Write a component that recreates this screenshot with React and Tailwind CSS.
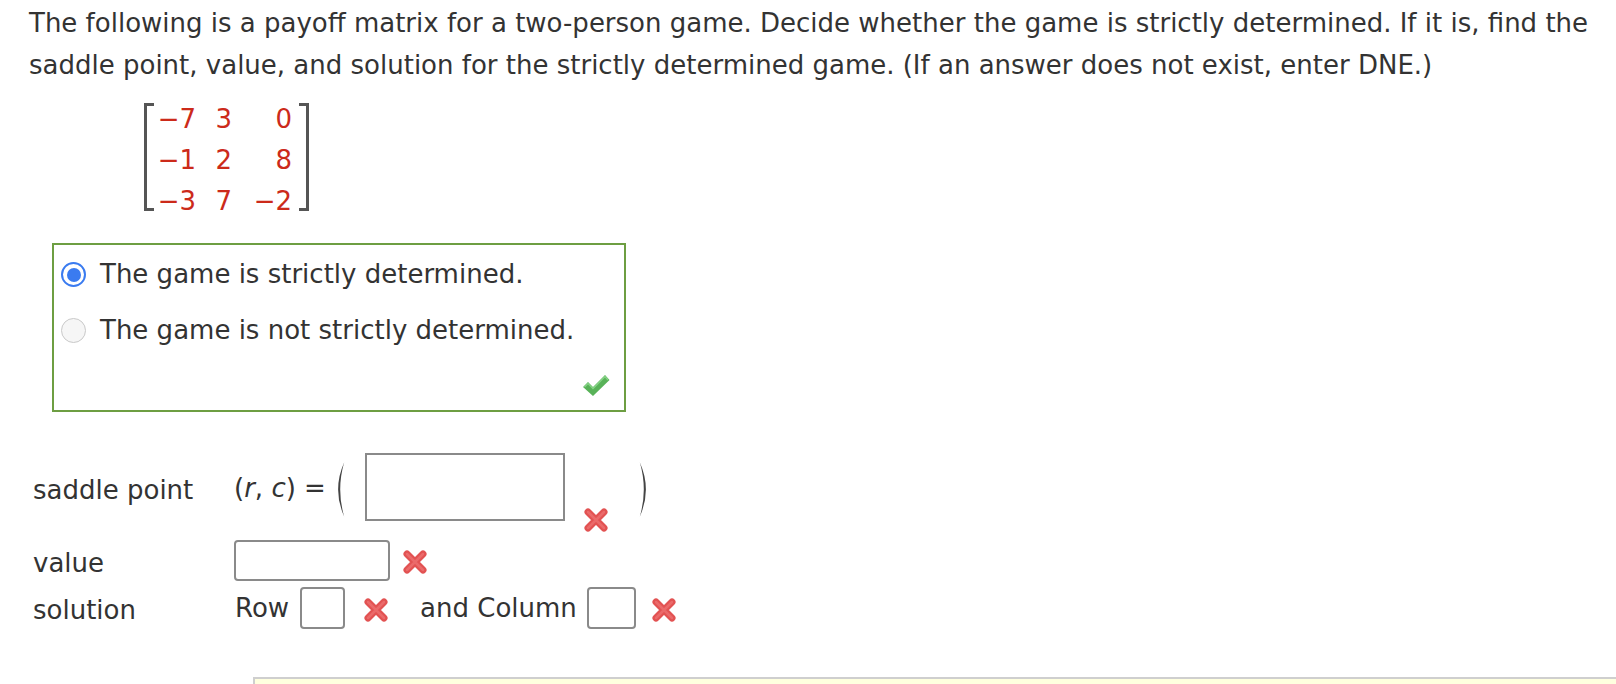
import React from 'react';

const rows = [
  ['\u22127', '3', '0'],
  ['\u22121', '2', '8'],
  ['\u22123', '7', '\u22122'],
];

function Cross() {
  return (
    <svg viewBox="0 0 26 26" className="w-[26px] h-[26px]">
      <path d="M5 5 L21 21 M21 5 L5 21" stroke="#e25252" strokeWidth="7" strokeLinecap="round" fill="none" />
      <path d="M5 5 L21 21 M21 5 L5 21" stroke="#f27c7c" strokeWidth="2.5" strokeLinecap="round" fill="none" opacity="0.6" />
    </svg>
  );
}

function Check() {
  return (
    <svg viewBox="0 0 28 25" className="w-[28px] h-[25px]">
      <path d="M1 14 L6 9 L11 14 L23 2 L27.5 7 L11 23 Z" fill="#58b258" />
      <path d="M2.5 14 L6 10.5 L11 15.5 L23 3.5 L26 7" stroke="#86d486" strokeWidth="1.3" fill="none" />
    </svg>
  );
}

function Paren({ flip }) {
  return (
    <svg viewBox="0 0 14 60" className={`w-[13px] h-[59px] ${flip ? '-scale-x-100' : ''}`}>
      <path d="M12 1 Q-1 30 12 59 Q3.5 30 12 1 Z" fill="#444" />
    </svg>
  );
}

function Radio({ checked }) {
  if (checked) {
    return (
      <span className="flex items-center justify-center w-[25px] h-[25px] rounded-full border-[2.5px] border-[#3a7bf0] bg-white">
        <span className="w-[14px] h-[14px] rounded-full bg-[#3a7bf0]" />
      </span>
    );
  }
  return <span className="w-[25px] h-[25px] rounded-full border border-[#c9c9c9] bg-[#f6f6f6]" />;
}

export default function App() {
  return (
    <div className="font-['DejaVu_Sans',sans-serif] text-[#333] text-[26px] bg-white min-h-[684px]">
      <p className="pl-[29px] pt-[2px] leading-[42px] whitespace-nowrap">
        The following is a payoff matrix for a two-person game. Decide whether the game is strictly determined. If it is, find the
        <br />
        saddle point, value, and solution for the strictly determined game. (If an answer does not exist, enter DNE.)
      </p>

      <div className="ml-[144px] mt-[13px] flex items-start">
        <div className="mt-[4px] w-[10px] h-[108px] border-l-[3px] border-t-[3px] border-b-[3px] border-[#555]" />
        <div className="grid grid-cols-[42px_36px_60px] text-[#cc2a1a] leading-[41px] text-right">
          {rows.map((r, i) =>
            r.map((v, j) => <span key={`${i}-${j}`}>{v}</span>)
          )}
        </div>
        <div className="ml-[7px] mt-[4px] w-[10px] h-[108px] border-r-[3px] border-t-[3px] border-b-[3px] border-[#555]" />
      </div>

      <div className="ml-[52px] mt-[21px] w-[574px] h-[169px] border-2 border-[#6d9e42] flex flex-col">
        <div className="flex items-center gap-[14px] pl-[7px] mt-[17px] h-[25px]">
          <Radio checked />
          <span>The game is strictly determined.</span>
        </div>
        <div className="flex items-center gap-[14px] pl-[7px] mt-[31px] h-[25px]">
          <Radio />
          <span>The game is not strictly determined.</span>
        </div>
        <div className="mt-auto self-end mr-[14px] mb-[12px]">
          <Check />
        </div>
      </div>

      <div className="ml-[33px] mt-[41px] flex items-center h-[68px]">
        <span className="w-[201px] pt-[6px]">saddle point</span>
        <span className="pt-[2px]">(<i>r</i>, <i>c</i>) =</span>
        <span className="ml-[7px] mt-[4px]"><Paren /></span>
        <div className="ml-[19px] w-[200px] h-[68px] border-2 border-[#8a8a8a]" />
        <span className="ml-[18px] self-end mb-[-12px]"><Cross /></span>
        <span className="ml-[29px] mt-[5px]"><Paren flip /></span>
      </div>

      <div className="ml-[33px] mt-[19px] flex items-center h-[41px]">
        <span className="w-[201px] pt-[5px]">value</span>
        <div className="w-[156px] h-[41px] border-2 border-[#8a8a8a] rounded-[4px]" />
        <span className="ml-[12px] pt-[2px]"><Cross /></span>
      </div>

      <div className="ml-[33px] mt-[6px] flex items-center h-[42px]">
        <span className="w-[202px] pt-[4px]">solution</span>
        <span>Row</span>
        <div className="ml-[11px] w-[45px] h-[42px] border-2 border-[#8a8a8a] rounded-[4px]" />
        <span className="ml-[18px] pt-[4px]"><Cross /></span>
        <span className="ml-[31px]">and Column</span>
        <div className="ml-[10px] w-[49px] h-[42px] border-2 border-[#8a8a8a] rounded-[4px]" />
        <span className="ml-[15px] pt-[4px]"><Cross /></span>
      </div>

      <div className="ml-[253px] mt-[48px] h-[40px] border-t-2 border-l-2 border-[#cfcfcf] bg-[#ffffdf]" />
    </div>
  );
}
